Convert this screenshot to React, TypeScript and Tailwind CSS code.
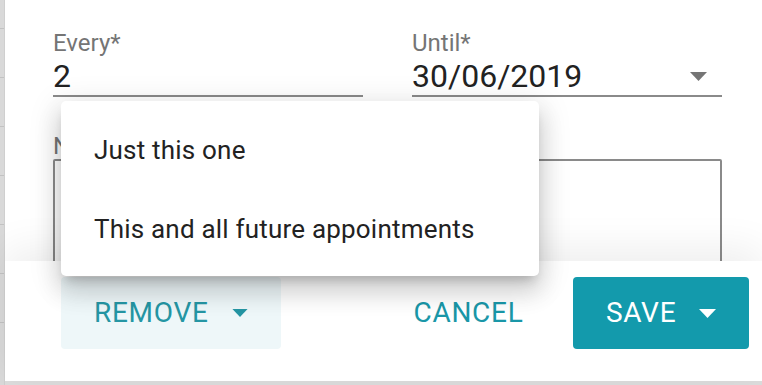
import React from 'react';

const font = { fontFamily: 'Roboto, "Noto Sans", sans-serif' };

const Caret = ({ className }: { className: string }) => (
  <svg viewBox="0 0 17 9" className={className} fill="currentColor">
    <path d="M0 0h17L8.5 9z" />
  </svg>
);

const Field = ({ label, value, caret }: { label: string; value: string; caret?: boolean }) => (
  <div className="w-[310px]">
    <div className="text-[24px] leading-[28px] text-[#757575]">{label}</div>
    <div className="flex items-center justify-between h-[40px] border-b-2 border-[#8a8a8a]">
      <span className="text-[32px] leading-[36px] text-[#222]">{value}</span>
      {caret && <Caret className="w-[17px] h-[9px] mr-[15px] text-[#757575]" />}
    </div>
  </div>
);

const App = () => {
  return (
    <div className="relative w-[762px] h-[385px] overflow-hidden bg-white flex" style={font}>
      <div className="w-[5px] shrink-0 bg-[#d9d9d9] border-r border-[#cfcfcf] flex flex-col pt-[28px] gap-[48px]">
        {[0, 1, 2, 3, 4, 5, 6].map((i) => (
          <div key={i} className="h-[1px] bg-[#c2c2c2]" />
        ))}
      </div>
      <div className="flex-1 flex flex-col">
        <div className="h-[261px] pl-[48px] pt-[29px] overflow-hidden">
          <div className="flex gap-[49px]">
            <Field label="Every*" value="2" />
            <Field label="Until*" value="30/06/2019" caret />
          </div>
          <div className="mt-[36px] text-[24px] leading-[26px] text-[#757575]">Notes</div>
          <div className="w-[669px] h-[140px] border-2 border-[#8a8a8a] rounded-[2px]" />
        </div>
        <div className="relative z-10 h-[120px] bg-white shadow-[0_-12px_40px_rgba(0,0,0,0.07)] flex items-start pt-[16px] pl-[56px]">
          <button className="w-[220px] h-[72px] rounded-[4px] bg-[#eef7f9] flex items-center pl-[33px] gap-[23px] text-[28px] tracking-[0.025em] text-[#2596a4]">
            REMOVE
            <Caret className="w-[16px] h-[8px]" />
          </button>
          <button className="ml-[100px] w-[175px] h-[72px] flex items-center justify-center text-[28px] tracking-[0.025em] text-[#1a97a8]">
            CANCEL
          </button>
          <button className="ml-[17px] w-[176px] h-[72px] rounded-[4px] bg-[#139aac] flex items-center pl-[33px] gap-[23px] text-[28px] tracking-[0.025em] text-white">
            SAVE
            <Caret className="w-[17px] h-[9px]" />
          </button>
        </div>
        <div className="h-[4px] bg-[#dcdcdc]" />
      </div>
      <div className="absolute z-20 left-[61px] top-[101px] w-[478px] h-[175px] bg-white rounded-[5px] shadow-[0_8px_10px_-5px_rgba(0,0,0,0.2),0_16px_24px_2px_rgba(0,0,0,0.12),0_6px_30px_5px_rgba(0,0,0,0.1)] pt-[10px]">
        <div className="h-[79px] flex items-center pl-[33px] text-[26px] tracking-[0.2px] text-[#222]">Just this one</div>
        <div className="h-[79px] flex items-center pl-[33px] text-[26px] tracking-[0.2px] text-[#222]">This and all future appointments</div>
      </div>
    </div>
  );
};

export default App;
